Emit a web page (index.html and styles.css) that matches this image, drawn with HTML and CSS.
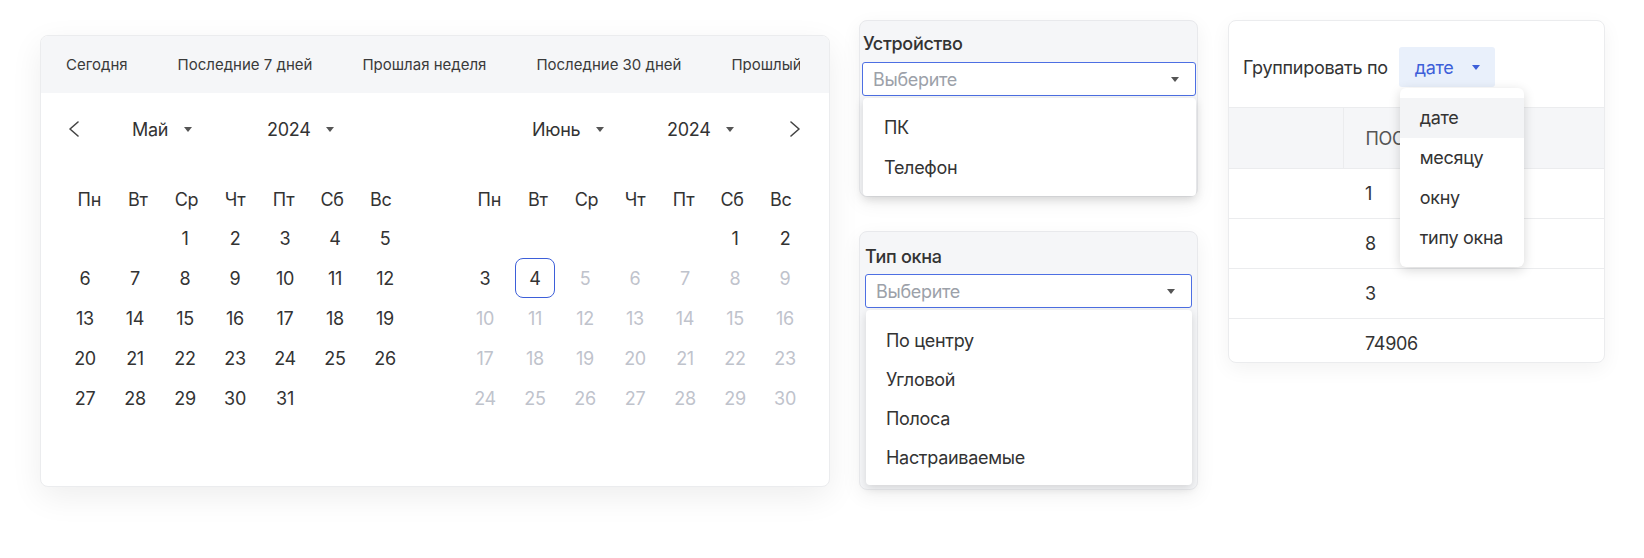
FILE: index.html
```html
<!DOCTYPE html>
<html lang="ru">
<head>
<meta charset="utf-8">
<title>Фильтры</title>
<link rel="stylesheet" href="styles.css">
</head>
<body>
<div class="page">
  <div class="cal">
    <div class="presets">
      <div class="presets-inner">
        <span class="preset">Сегодня</span>
        <span class="preset">Последние 7 дней</span>
        <span class="preset">Прошлая неделя</span>
        <span class="preset">Последние 30 дней</span>
        <span class="preset">Прошлый месяц</span>
      </div>
    </div>
    <div class="cal-body">
      <div class="month">
        <div class="nav">
          <div class="nav-slot">
            <svg class="chev chev-left" width="12" height="16" viewBox="0 0 12 16"><polyline points="10,1 2,8 10,15" fill="none" stroke="#444" stroke-width="1.6" stroke-linejoin="round" stroke-linecap="round"/></svg>
          </div>
          <div class="sel sel-month">Май<span class="caret"></span></div>
          <div class="sel">2024<span class="caret"></span></div>
        </div>
        <div class="weekdays"><span>Пн</span><span>Вт</span><span>Ср</span><span>Чт</span><span>Пт</span><span>Сб</span><span>Вс</span></div>
        <div class="days">
          <span></span><span></span><span>1</span><span>2</span><span>3</span><span>4</span><span>5</span>
          <span>6</span><span>7</span><span>8</span><span>9</span><span>10</span><span>11</span><span>12</span>
          <span>13</span><span>14</span><span>15</span><span>16</span><span>17</span><span>18</span><span>19</span>
          <span>20</span><span>21</span><span>22</span><span>23</span><span>24</span><span>25</span><span>26</span>
          <span>27</span><span>28</span><span>29</span><span>30</span><span>31</span>
        </div>
      </div>
      <div class="month">
        <div class="nav">
          <div class="nav-slot"></div>
          <div class="sel sel-month">Июнь<span class="caret"></span></div>
          <div class="sel">2024<span class="caret"></span></div>
          <svg class="chev chev-right" width="12" height="16" viewBox="0 0 12 16"><polyline points="2,1 10,8 2,15" fill="none" stroke="#444" stroke-width="1.6" stroke-linejoin="round" stroke-linecap="round"/></svg>
        </div>
        <div class="weekdays"><span>Пн</span><span>Вт</span><span>Ср</span><span>Чт</span><span>Пт</span><span>Сб</span><span>Вс</span></div>
        <div class="days">
          <span></span><span></span><span></span><span></span><span></span><span>1</span><span>2</span>
          <span>3</span><span class="today">4</span><span class="off">5</span><span class="off">6</span><span class="off">7</span><span class="off">8</span><span class="off">9</span>
          <span class="off">10</span><span class="off">11</span><span class="off">12</span><span class="off">13</span><span class="off">14</span><span class="off">15</span><span class="off">16</span>
          <span class="off">17</span><span class="off">18</span><span class="off">19</span><span class="off">20</span><span class="off">21</span><span class="off">22</span><span class="off">23</span>
          <span class="off">24</span><span class="off">25</span><span class="off">26</span><span class="off">27</span><span class="off">28</span><span class="off">29</span><span class="off">30</span>
        </div>
      </div>
    </div>
  </div>

  <div class="filters">
    <div class="fcard fcard-device">
      <div class="flabel">Устройство</div>
      <div class="select-wrap">
        <div class="select">Выберите<span class="caret"></span></div>
        <div class="menu menu-device">
          <div class="mitem">ПК</div>
          <div class="mitem">Телефон</div>
        </div>
      </div>
    </div>
    <div class="fcard fcard-window">
      <div class="flabel">Тип окна</div>
      <div class="select-wrap">
        <div class="select">Выберите<span class="caret"></span></div>
        <div class="menu menu-window">
          <div class="mitem">По центру</div>
          <div class="mitem">Угловой</div>
          <div class="mitem">Полоса</div>
          <div class="mitem">Настраиваемые</div>
        </div>
      </div>
    </div>
  </div>

  <div class="gcard">
    <div class="toolbar">
      <span class="glabel">Группировать по</span>
      <div class="gb-wrap">
        <div class="gb-btn">дате<span class="caret caret-blue"></span></div>
        <div class="gmenu">
          <div class="gitem active">дате</div>
          <div class="gitem">месяцу</div>
          <div class="gitem">окну</div>
          <div class="gitem">типу окна</div>
        </div>
      </div>
    </div>
    <table class="tbl">
      <thead>
        <tr><th class="c1"></th><th class="c2">ПОСЕЩЕНИЯ</th></tr>
      </thead>
      <tbody>
        <tr><td class="c1"></td><td class="c2">1</td></tr>
        <tr><td class="c1"></td><td class="c2">8</td></tr>
        <tr><td class="c1"></td><td class="c2">3</td></tr>
        <tr><td class="c1"></td><td class="c2">74906</td></tr>
      </tbody>
    </table>
  </div>
</div>
</body>
</html>
```

FILE: styles.css
```css
* { box-sizing: border-box; }
html, body { margin: 0; padding: 0; background: #fff; }
body {
  font-family: Inter, "Noto Sans", "DejaVu Sans", sans-serif;
  color: #333;
  font-size: 18px;
  letter-spacing: -0.3px;
}
.page {
  display: flex;
  align-items: flex-start;
  padding: 20px 0 0 40px;
  width: 1644px;
  height: 558px;
  overflow: hidden;
}

/* calendar */
.cal {
  margin-top: 15px;
  width: 790px;
  border: 1px solid #ebecee;
  border-radius: 8px;
  background: #fff;
  box-shadow: 0 10px 32px rgba(0, 0, 0, 0.07);
  overflow: hidden;
}
.presets {
  height: 57px;
  background: #f5f6f8;
  padding: 0 24px 0 25px;
  display: flex;
  align-items: center;
}
.presets-inner {
  display: flex;
  gap: 50px;
  overflow: hidden;
  white-space: nowrap;
  width: 734px;
  font-size: 15px;
  letter-spacing: 0;
  color: #3a3a3a;
}
.preset { flex: none; }
.cal-body {
  display: flex;
  gap: 60px;
  padding: 16px 24px 28px 24px;
}
.month { width: 340px; }
.nav {
  display: flex;
  align-items: center;
  height: 40px;
}
.nav-slot {
  width: 67px;
  flex: none;
  display: flex;
  align-items: center;
}
.chev { flex: none; }
.chev-left { margin-left: 3px; }
.chev-right { margin-left: auto; margin-right: 4px; }
.sel {
  flex: none;
  display: flex;
  align-items: center;
  gap: 16px;
  font-size: 18px;
  color: #333;
}
.sel-month { width: 135px; }
.caret {
  display: inline-block;
  width: 0;
  height: 0;
  border-left: 4.5px solid transparent;
  border-right: 4.5px solid transparent;
  border-top: 5px solid #555;
}
.weekdays {
  margin-top: 31px;
  display: grid;
  grid-template-columns: repeat(7, 1fr);
  height: 38px;
  align-items: center;
  text-align: center;
  font-size: 18px;
}
.days {
  display: grid;
  grid-template-columns: repeat(7, 40px);
  grid-template-rows: repeat(6, 40px);
  column-gap: 10px;
  font-size: 18px;
}
.days span {
  display: flex;
  align-items: center;
  justify-content: center;
  border-radius: 8px;
}
.days .off { color: #bfc3cc; }
.days .today { border: 1px solid #3d5fd9; }

/* filters */
.filters {
  margin-left: 29px;
  display: flex;
  flex-direction: column;
  gap: 34px;
}
.fcard {
  position: relative;
  width: 339px;
  background: #f5f6f8;
  border: 1px solid #e8e9ec;
  border-radius: 8px;
  box-shadow: 0 6px 20px rgba(0, 0, 0, 0.06);
}
.fcard-device { height: 177px; padding: 10px 1px 0 2px; }
.fcard-window { height: 259px; padding: 12px 5px 0 5px; }
.flabel {
  font-size: 18px;
  font-weight: 500;
  line-height: 26px;
  color: #333;
  padding-left: 1px;
}
.fcard-device .flabel { margin-bottom: 5px; }
.fcard-window .flabel { margin-bottom: 4px; padding-left: 0; }
.select-wrap { position: relative; }
.select {
  height: 34px;
  background: #fff;
  border: 1px solid #4d6fe3;
  border-radius: 3px;
  display: flex;
  align-items: center;
  justify-content: space-between;
  padding: 0 16px 0 10px;
  font-size: 18px;
  color: #9ca1a9;
}
.menu {
  position: absolute;
  left: 1px;
  right: 0;
  top: 36px;
  background: #fff;
  border-radius: 4px;
  box-shadow: 0 3px 10px rgba(0, 0, 0, 0.14);
  font-size: 18px;
  color: #333;
}
.menu-device { padding: 10px 0 8px 0; }
.menu-device .mitem { height: 40px; line-height: 40px; padding-left: 21px; }
.menu-window { padding: 11px 0 8px 0; }
.menu-window .mitem { height: 39px; line-height: 39px; padding-left: 20px; }

/* group card */
.gcard {
  margin-left: 30px;
  width: 377px;
  height: 343px;
  background: #fff;
  border: 1px solid #ebecee;
  border-radius: 8px;
  box-shadow: 0 6px 20px rgba(0, 0, 0, 0.05);
  overflow: hidden;
}
.toolbar {
  display: flex;
  align-items: center;
  padding: 26px 0 20px 14px;
  gap: 11px;
}
.glabel { font-size: 18px; color: #333; }
.gb-wrap { position: relative; }
.gb-btn {
  width: 96px;
  height: 40px;
  background: #e9f0fb;
  border-radius: 3px;
  display: flex;
  align-items: center;
  gap: 18px;
  padding-left: 16px;
  font-size: 18px;
  color: #3d5fd9;
}
.caret-blue { border-top-color: #3d5fd9; }
.gmenu {
  position: absolute;
  top: 41px;
  left: 1px;
  width: 124px;
  background: #fff;
  border-radius: 6px;
  box-shadow: 0 3px 12px rgba(0, 0, 0, 0.16);
  padding: 10px 0 9px 0;
  z-index: 2;
}
.gitem {
  height: 40px;
  line-height: 40px;
  padding-left: 20px;
  font-size: 18px;
  color: #333;
}
.gitem.active { background: #f3f4f6; }
.tbl {
  width: 100%;
  border-collapse: collapse;
  font-size: 18px;
}
.tbl th {
  height: 61px;
  background: #f5f6f8;
  border-top: 1px solid #ebecee;
  border-bottom: 1px solid #ebecee;
  text-align: left;
  font-weight: 400;
  color: #555;
  padding: 0;
}
.tbl th.c1 { width: 114px; border-right: 1px solid #ebecee; }
.tbl .c2 { padding-left: 22px; }
.tbl td {
  height: 50px;
  border-bottom: 1px solid #ebecee;
  padding: 0;
}
.tbl td.c2 { padding-left: 22px; color: #333; }
```
